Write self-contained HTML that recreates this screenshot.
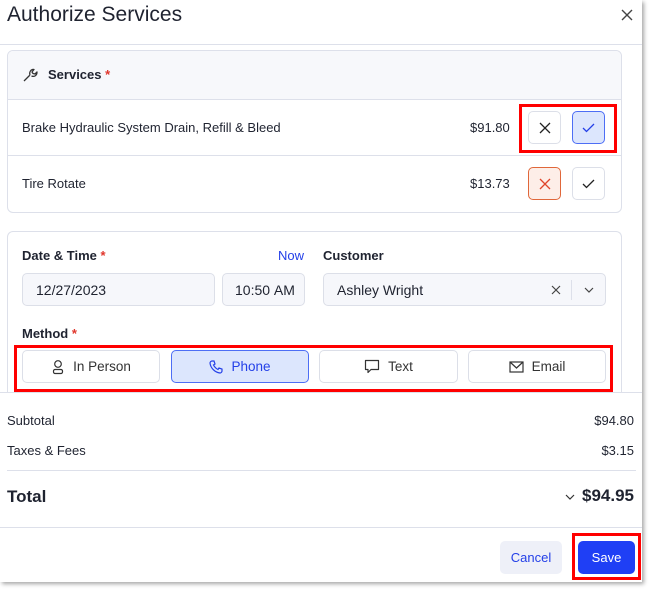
<!DOCTYPE html>
<html><head><style>
*{box-sizing:border-box;margin:0;padding:0}
body{width:650px;height:589px;background:#fff;font-family:"Liberation Sans",sans-serif;color:#1f2330;position:relative;overflow:hidden}
.dlg{position:absolute;left:0;top:0;width:642px;height:582px;background:#fff;box-shadow:2px 2px 4px rgba(0,0,0,.35)}
.a{position:absolute}
.card{position:absolute;left:7px;width:615px;border:1px solid #dde0ea;border-radius:6px;background:#fff}
.btn{position:absolute;border:1px solid #dcdfe8;border-radius:5px;background:#fff;display:flex;align-items:center;justify-content:center;font-size:13.5px;color:#333}
.red{position:absolute;border:3px solid #f00}
.inp{position:absolute;top:273px;height:33px;border:1px solid #dcdfe8;border-radius:5px;background:#f6f7fb;font-size:14px;display:flex;align-items:center;padding-left:13px}
.req{color:#e0352b}
.lbl{position:absolute;font-size:13px;font-weight:bold;color:#1f2330}
svg{display:block}
</style></head><body>
<div class="dlg">
<div class="a" style="left:7px;top:3px;font-size:21px;">Authorize Services</div>
<svg class="a" style="left:621px;top:9px" width="12" height="12"><path d="M1 1L11 11M11 1L1 11" stroke="#444" stroke-width="1.4"/></svg>
<div class="a" style="left:0;top:44px;width:642px;height:1px;background:#dde0ea"></div>

<div class="card" style="top:50px;height:163px;overflow:hidden">
 <div style="height:49px;background:#f7f8fb;border-bottom:1px solid #dde0ea;position:relative">
  <svg class="a" style="left:14px;top:16px" width="16" height="16" viewBox="0 0 16 16"><path d="M2 14L8 8M8 8C7 5 9 2 12 2.5L10 5l1 1.5 2 .5 2-2C15 9 12 10 9.5 9" fill="none" stroke="#333" stroke-width="1.3" stroke-linejoin="round"/></svg>
  <div class="a" style="left:40px;top:16px;font-size:13px;font-weight:bold">Services <span class="req">*</span></div>
 </div>
 <div style="height:56px;border-bottom:1px solid #dde0ea;position:relative">
  <div class="a" style="left:14px;top:20px;font-size:13px">Brake Hydraulic System Drain, Refill &amp; Bleed</div>
  <div class="a" style="left:462px;top:20px;font-size:13px">$91.80</div>
 </div>
 <div style="height:56px;position:relative">
  <div class="a" style="left:14px;top:20px;font-size:13px">Tire Rotate</div>
  <div class="a" style="left:462px;top:20px;font-size:13px">$13.73</div>
 </div>
</div>
<div class="btn" style="left:528px;top:111px;width:33px;height:33px"><svg width="12" height="12"><path d="M1 1L11 11M11 1L1 11" stroke="#222" stroke-width="1.3"/></svg></div>
<div class="btn" style="left:572px;top:111px;width:33px;height:33px;background:#dce6fd;border-color:#4d6ef5"><svg width="13" height="10"><path d="M1 5L4.5 8.5L12 1" fill="none" stroke="#2440e8" stroke-width="1.3"/></svg></div>
<div class="red" style="left:519px;top:104px;width:98px;height:49px"></div>
<div class="btn" style="left:528px;top:167px;width:33px;height:33px;background:#fdeee8;border-color:#e0673a"><svg width="12" height="12"><path d="M1 1L11 11M11 1L1 11" stroke="#e0452b" stroke-width="1.3"/></svg></div>
<div class="btn" style="left:572px;top:167px;width:33px;height:33px"><svg width="13" height="10"><path d="M1 5L4.5 8.5L12 1" fill="none" stroke="#222" stroke-width="1.3"/></svg></div>

<div class="card" style="top:231px;height:175px;border-bottom:none;border-radius:6px 6px 0 0"></div>
<div class="lbl" style="left:22px;top:248px">Date &amp; Time <span class="req">*</span></div>
<div class="a" style="left:278px;top:248px;font-size:13px;color:#2440e8">Now</div>
<div class="lbl" style="left:323px;top:248px">Customer</div>
<div class="inp" style="left:22px;width:193px">12/27/2023</div>
<div class="inp" style="left:222px;width:83px;padding-left:12px">10:50&nbsp;AM</div>
<div class="inp" style="left:323px;width:283px">Ashley Wright
 <svg class="a" style="left:227px;top:11px" width="10" height="10"><path d="M1 1L9 9M9 1L1 9" stroke="#444" stroke-width="1.2"/></svg>
 <div class="a" style="left:247px;top:6px;width:1px;height:20px;background:#dde0ea"></div>
 <svg class="a" style="left:260px;top:13px" width="10" height="6"><path d="M1 1L5 5L9 1" fill="none" stroke="#444" stroke-width="1.2"/></svg>
</div>
<div class="lbl" style="left:22px;top:326px">Method <span class="req">*</span></div>
<div class="btn" style="left:22px;top:350px;width:138px;height:33px"><svg width="14" height="16" style="margin-right:8px"><circle cx="7" cy="5" r="3.3" fill="none" stroke="#333" stroke-width="1.2"/><rect x="2.5" y="10.5" width="9" height="4" rx="1.5" fill="none" stroke="#333" stroke-width="1.2"/></svg>In Person</div>
<div class="btn" style="left:171px;top:350px;width:138px;height:33px;background:#dce6fd;border-color:#4d6ef5;color:#2440e8"><svg width="14" height="14" style="margin-right:8px" viewBox="0 0 14 14"><path d="M3 1L5 1L6 4L4.5 5C5.5 7 7 8.5 9 9.5L10 8L13 9L13 11C13 12 12 13 11 13C6 12.5 1.5 8 1 3C1 2 2 1 3 1Z" fill="none" stroke="#2440e8" stroke-width="1.2"/></svg>Phone</div>
<div class="btn" style="left:319px;top:350px;width:139px;height:33px"><svg width="16" height="15" style="margin-right:8px"><path d="M1.5 1.5H14.5V10.5H7L4 13.5V10.5H1.5Z" fill="none" stroke="#333" stroke-width="1.2" stroke-linejoin="round"/></svg>Text</div>
<div class="btn" style="left:468px;top:350px;width:138px;height:33px"><svg width="15" height="12" style="margin-right:8px"><rect x="1" y="1" width="13" height="10" fill="none" stroke="#333" stroke-width="1.2"/><path d="M1 1L7.5 7L14 1" fill="none" stroke="#333" stroke-width="1.2"/></svg>Email</div>
<div class="red" style="left:14px;top:345px;width:599px;height:47px"></div>
<div class="a" style="left:0;top:392px;width:642px;height:1px;background:#dde0ea"></div>
<div class="a" style="left:0;top:393px;width:642px;height:20px;background:#fff"></div>

<div class="a" style="left:7px;top:413px;font-size:13px">Subtotal</div>
<div class="a" style="right:8px;top:413px;font-size:13px">$94.80</div>
<div class="a" style="left:7px;top:443px;font-size:13px">Taxes &amp; Fees</div>
<div class="a" style="right:8px;top:443px;font-size:13px">$3.15</div>
<div class="a" style="left:7px;top:470px;width:629px;height:1px;background:#dde0ea"></div>
<div class="a" style="left:7px;top:487px;font-size:17px;font-weight:bold">Total</div>
<svg class="a" style="left:565px;top:494px" width="10" height="6"><path d="M1 1L5 5L9 1" fill="none" stroke="#333" stroke-width="1.2"/></svg>
<div class="a" style="right:8px;top:486px;font-size:17px;font-weight:bold">$94.95</div>
<div class="a" style="left:0;top:527px;width:642px;height:1px;background:#dde0ea"></div>
<div class="a" style="left:500px;top:541px;width:62px;height:33px;border-radius:5px;background:#eef0f8;color:#2440e8;font-size:13px;display:flex;align-items:center;justify-content:center">Cancel</div>
<div class="a" style="left:578px;top:541px;width:57px;height:33px;border-radius:5px;background:#1f3ff5;color:#fff;font-size:13px;display:flex;align-items:center;justify-content:center">Save</div>
<div class="red" style="left:572px;top:533px;width:69px;height:47px"></div>
</div>
</body></html>
